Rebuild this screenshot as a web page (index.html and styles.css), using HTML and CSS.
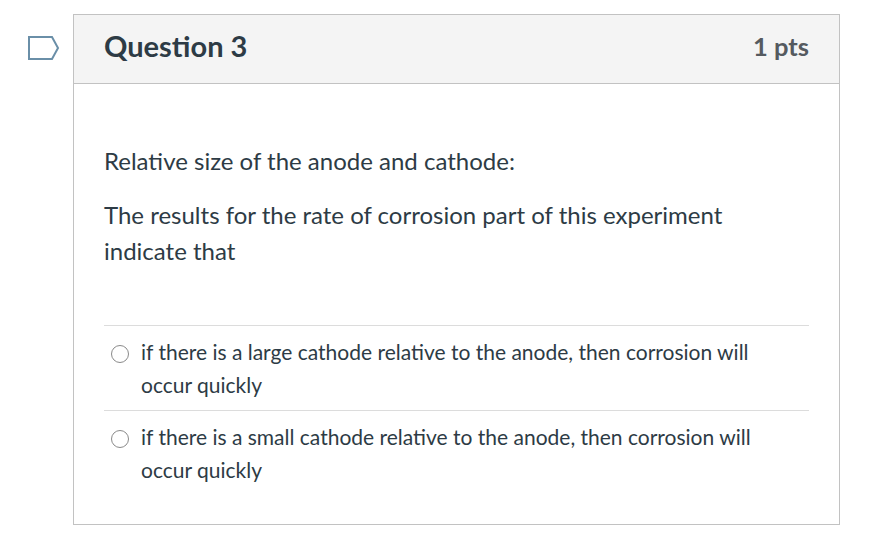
FILE: index.html
```html
<!DOCTYPE html>
<html>
<head>
<meta charset="utf-8">
<link rel="stylesheet" href="styles.css">
</head>
<body>
<div class="page">
  <div class="flag">
    <svg width="34" height="26" viewBox="0 0 34 26"><path d="M2 2 H25 L31 13 L25 24 H2 Z" fill="#fff" stroke="#6a8fa8" stroke-width="2" stroke-linejoin="miter"/></svg>
  </div>
  <div class="question">
    <div class="q-header">
      <h2 class="q-title">Question 3</h2>
      <span class="q-points">1 pts</span>
    </div>
    <div class="q-body">
      <p class="q-text">Relative size of the anode and cathode:</p>
      <p class="q-text">The results for the rate of corrosion part of this experiment indicate that</p>
      <div class="answers">
        <label class="answer">
          <span class="radio"></span>
          <span class="answer-text">if there is a large cathode relative to the anode, then corrosion will occur quickly</span>
        </label>
        <label class="answer">
          <span class="radio"></span>
          <span class="answer-text">if there is a small cathode relative to the anode, then corrosion will occur quickly</span>
        </label>
      </div>
    </div>
  </div>
</div>
</body>
</html>
```
FILE: styles.css
```css
html, body {
  margin: 0;
  padding: 0;
  background: #fff;
}
body {
  font-family: Lato, "Noto Sans", sans-serif;
  color: #2d3b45;
}
.page {
  display: flex;
  align-items: flex-start;
  padding: 14px 0 0 0;
}
.flag {
  width: 73px;
  display: flex;
  justify-content: flex-start;
  padding: 21px 0 0 27px;
  box-sizing: border-box;
}
.flag svg {
  display: block;
}
.question {
  width: 767px;
  border: 1px solid #c2c2c2;
  box-sizing: border-box;
}
.q-header {
  background: #f4f4f4;
  border-bottom: 1px solid #c2c2c2;
  height: 69px;
  box-sizing: border-box;
  display: flex;
  align-items: center;
  justify-content: space-between;
  padding: 0 30px 0 30px;
}
.q-title {
  margin: 0;
  font-size: 29px;
  font-weight: 700;
  color: #2d3b45;
  line-height: 1;
  position: relative;
  top: -4px;
}
.q-points {
  font-size: 25.5px;
  font-weight: 700;
  color: #555a5f;
  position: relative;
  top: -3px;
}
.q-body {
  padding: 59px 30px 29px 30px;
}
.q-text {
  margin: 0 0 18px 0;
  font-size: 24px;
  line-height: 36px;
}
.answers {
  margin-top: 56px;
}
.answer {
  display: flex;
  align-items: flex-start;
  border-top: 1px solid #dcdcdc;
  padding: 9px 40px 9px 8px;
}
.radio {
  width: 18px;
  height: 18px;
  border: 1.5px solid #8a8a8a;
  border-radius: 50%;
  box-sizing: border-box;
  flex: none;
  margin: 10px 12px 0 -1px;
}
.answer-text {
  font-size: 21px;
  line-height: 33px;
}
```
